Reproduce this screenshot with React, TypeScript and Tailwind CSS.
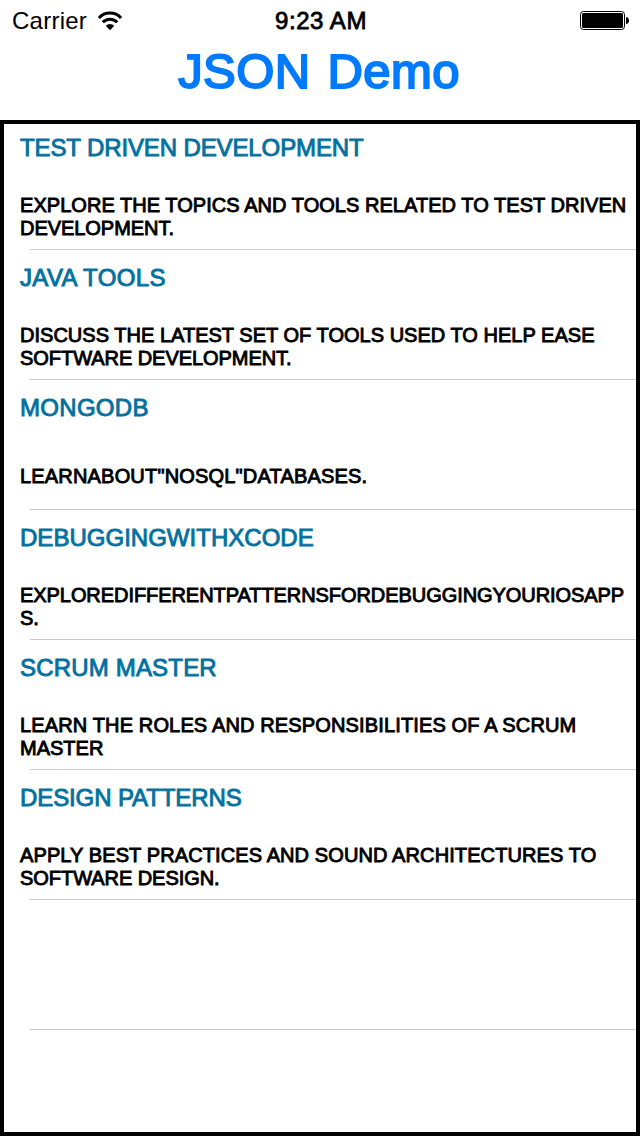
import React from "react";

interface Line {
  text: string;
  tracking?: string;
}

interface Topic {
  title: string;
  tracking: string;
  lines: Line[];
}

const topics: Topic[] = [
  {
    title: "TEST DRIVEN DEVELOPMENT",
    tracking: "tracking-[-0.12px]",
    lines: [
      { text: "EXPLORE THE TOPICS AND TOOLS RELATED TO TEST DRIVEN", tracking: "tracking-[0.04px]" },
      { text: "DEVELOPMENT.", tracking: "tracking-[-0.05px]" },
    ],
  },
  {
    title: "JAVA TOOLS",
    tracking: "tracking-[0.35px]",
    lines: [
      { text: "DISCUSS THE LATEST SET OF TOOLS USED TO HELP EASE", tracking: "tracking-[0.02px]" },
      { text: "SOFTWARE DEVELOPMENT.", tracking: "tracking-[-0.05px]" },
    ],
  },
  {
    title: "MONGODB",
    tracking: "tracking-[0.3px]",
    lines: [{ text: 'LEARNABOUT"NOSQL"DATABASES.', tracking: "tracking-[0.18px]" }],
  },
  {
    title: "DEBUGGINGWITHXCODE",
    tracking: "tracking-[0.02px]",
    lines: [
      { text: "EXPLOREDIFFERENTPATTERNSFORDEBUGGINGYOURIOSAPP", tracking: "tracking-[-0.065px]" },
      { text: "S." },
    ],
  },
  {
    title: "SCRUM MASTER",
    tracking: "tracking-[0.18px]",
    lines: [
      { text: "LEARN THE ROLES AND RESPONSIBILITIES OF A SCRUM", tracking: "tracking-[0.14px]" },
      { text: "MASTER" },
    ],
  },
  {
    title: "DESIGN PATTERNS",
    tracking: "tracking-[-0.1px]",
    lines: [
      { text: "APPLY BEST PRACTICES AND SOUND ARCHITECTURES TO", tracking: "tracking-[0.1px]" },
      { text: "SOFTWARE DESIGN.", tracking: "tracking-[-0.05px]" },
    ],
  },
];

function WifiIcon() {
  return (
    <svg width="26" height="20" viewBox="0 0 26 20" fill="none" stroke="#000" strokeWidth="3">
      <path d="M1.9 6.9A15.2 15.2 0 0 1 24.1 6.9" />
      <path d="M5.8 11.3A9.8 9.8 0 0 1 20.2 11.3" />
      <path d="M8.8 14.8A5.9 5.9 0 0 1 17.2 14.8L13 19.2Z" fill="#000" stroke="none" />
    </svg>
  );
}

function BatteryIcon() {
  return (
    <svg width="50" height="20" viewBox="0 0 50 20">
      <rect x="0.5" y="0.5" width="44" height="18" rx="3" fill="none" stroke="#000" />
      <rect x="2" y="2" width="41" height="15" rx="1.5" fill="#000" />
      <path d="M46 6C48 6 49 7.6 49 9.5S48 13 46 13Z" fill="#000" />
    </svg>
  );
}

function StatusBar() {
  return (
    <div className="grid h-[42px] grid-cols-3 items-center pl-3 pr-2.5 text-2xl text-black">
      <div className="flex items-center gap-2.5">
        <span className="tracking-[0.25px]">Carrier</span>
        <WifiIcon />
      </div>
      <span className="text-center tracking-[0.55px] [-webkit-text-stroke:0.8px]">9:23 AM</span>
      <div className="flex justify-end">
        <BatteryIcon />
      </div>
    </div>
  );
}

function TopicRow({ topic }: { topic?: Topic }) {
  return (
    <li className="flex h-[130px] flex-col">
      {topic && (
        <>
          <h2
            className={`flex h-14 items-center pl-4 text-2xl text-[#0371a0] [-webkit-text-stroke:0.9px] ${topic.tracking}`}
          >
            {topic.title}
          </h2>
          <div
            className={`flex h-[46px] flex-col justify-center whitespace-nowrap pl-4 text-xl/[23px] text-black [-webkit-text-stroke:0.9px] ${
              topic.lines.length > 1 ? "mt-[18px]" : "mt-[17px]"
            }`}
          >
            {topic.lines.map((line) => (
              <span key={line.text} className={line.tracking}>
                {line.text}
              </span>
            ))}
          </div>
        </>
      )}
      <div className="ml-[26px] mt-auto h-px bg-[#c8c7cc]" />
    </li>
  );
}

export default function App() {
  return (
    <div className="flex h-[1136px] w-[640px] flex-col overflow-hidden bg-white font-['Liberation_Sans',Arial,sans-serif]">
      <header className="h-[120px]">
        <StatusBar />
        <h1 className="pr-0.5 text-center text-[49px]/[58px] tracking-[0.4px] text-[#007aff] [word-spacing:3px] [-webkit-text-stroke:2px]">
          JSON Demo
        </h1>
      </header>
      <main className="flex-1 overflow-hidden border-4 border-black">
        <ul className="-mt-1">
          {topics.map((topic) => (
            <TopicRow key={topic.title} topic={topic} />
          ))}
          {/* blank cell below the data */}
          <TopicRow />
        </ul>
      </main>
    </div>
  );
}
